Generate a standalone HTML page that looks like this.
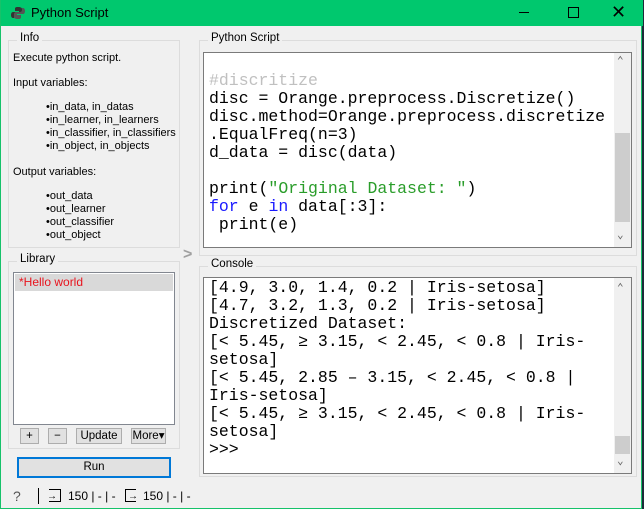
<!DOCTYPE html>
<html><head><style>
*{box-sizing:border-box;margin:0;padding:0}
body{width:644px;height:509px;background:#1e2a3a;position:relative;overflow:hidden;font-family:"Liberation Sans",sans-serif;font-size:12px;color:#000}
.win{position:absolute;left:0;top:0;width:642px;height:509px;background:#f0f0f0;border:1px solid #16c26a;border-top:none}
.title{position:absolute;left:0;top:0;width:642px;height:26px;background:#00c86e}
.title .t{position:absolute;left:30px;top:5px;font-size:13px}
.abs{position:absolute}
.gb{position:absolute;border:1px solid #dcdcdc}
.gl{position:absolute;background:#f0f0f0;padding:0 3px;font-size:11.5px;top:-9px;left:8px}
.code{position:absolute;background:#fff;border:1px solid #7a7a7a;font-family:"Liberation Mono",monospace;font-size:16.5px;line-height:18px;white-space:pre;overflow:hidden}
.sb{position:absolute;right:0;top:0;bottom:0;width:17px;background:#f0f0f0}
.btn{position:absolute;background:#e1e1e1;border:1px solid #adadad;font-size:11.5px;text-align:center;line-height:14px}
.li{position:absolute;font-size:11px}
</style></head><body>
<div class="win">
<div class="title">
<svg class="abs" style="left:10px;top:6px" width="14" height="14"><path d="M7 1C4 1 4 2 4 3v2h4v1H2C1 6 0 7 0 9s1 3 2 3h1v-2c0-1 1-2 2-2h4c1 0 2-1 2-2V3c0-1-1-2-4-2z" fill="#333"/><path d="M7 13c3 0 3-1 3-2V9H6V8h6c1 0 2-1 2-3s-1-3-2-3h-1v2c0 1-1 2-2 2H5C4 6 3 7 3 8v3c0 1 1 2 4 2z" fill="#555"/></svg>
<div class="t">Python Script</div>
<div class="abs" style="left:518px;top:12px;width:10px;height:1px;background:#000"></div>
<div class="abs" style="left:567px;top:7px;width:11px;height:11px;border:1px solid #000"></div>
<div class="abs" style="left:610px;top:1px;font-size:18px;line-height:22px">✕</div>
</div>

<div class="gb" style="left:7px;top:40px;width:172px;height:208px"><div class="gl">Info</div></div>
<div class="li" style="left:12px;top:52px">Execute python script.</div>
<div class="li" style="left:12px;top:77px">Input variables:</div>
<div class="li" style="left:45px;top:101px;line-height:13px">•in_data, in_datas<br>•in_learner, in_learners<br>•in_classifier, in_classifiers<br>•in_object, in_objects</div>
<div class="li" style="left:12px;top:166px">Output variables:</div>
<div class="li" style="left:45px;top:190px;line-height:13px">•out_data<br>•out_learner<br>•out_classifier<br>•out_object</div>

<div class="gb" style="left:7px;top:261px;width:172px;height:188px"><div class="gl">Library</div></div>
<div class="abs" style="left:12px;top:272px;width:162px;height:153px;background:#fff;border:1px solid #828790">
<div style="margin:1px;height:17px;background:#d9d9d9;color:#e8141e;padding-left:4px;line-height:17px;font-size:12px">*Hello world</div></div>
<div class="btn" style="left:19px;top:428px;width:19px;height:16px">+</div>
<div class="btn" style="left:47px;top:428px;width:19px;height:16px">−</div>
<div class="btn" style="left:75px;top:428px;width:46px;height:16px">Update</div>
<div class="btn" style="left:130px;top:428px;width:35px;height:16px">More▾</div>
<div class="btn" style="left:16px;top:457px;width:154px;height:21px;border:2px solid #0078d7;line-height:17px">Run</div>

<div class="abs" style="left:182px;top:246px;color:#a0a0a0;font-size:16px;font-weight:bold">&gt;</div>

<div class="gb" style="left:198px;top:40px;width:438px;height:216px"><div class="gl">Python Script</div></div>
<div class="code" style="left:202px;top:52px;width:429px;height:196px;padding:1px 0 0 5px"> 
<span style="color:#c0c0c0">#discritize</span>
disc = Orange.preprocess.Discretize()
disc.method=Orange.preprocess.discretize
.EqualFreq(n=3)
d_data = disc(data)

print(<span style="color:#2a9d2a">"Original Dataset: "</span>)
<span style="color:#1a1aff">for</span> e <span style="color:#1a1aff">in</span> data[:3]:
 print(e)
<div class="sb"><div class="abs" style="left:3px;top:0;font-size:11px;color:#606060">⌃</div><div class="abs" style="left:1px;top:80px;width:15px;height:89px;background:#cdcdcd"></div><div class="abs" style="left:3px;bottom:2px;font-size:11px;color:#606060">⌄</div></div>
</div>

<div class="gb" style="left:198px;top:266px;width:438px;height:211px"><div class="gl">Console</div></div>
<div class="code" style="left:202px;top:277px;width:429px;height:197px;padding:1px 0 0 5px">[4.9, 3.0, 1.4, 0.2 | Iris-setosa]
[4.7, 3.2, 1.3, 0.2 | Iris-setosa]
Discretized Dataset:
[&lt; 5.45, ≥ 3.15, &lt; 2.45, &lt; 0.8 | Iris-
setosa]
[&lt; 5.45, 2.85 – 3.15, &lt; 2.45, &lt; 0.8 |
Iris-setosa]
[&lt; 5.45, ≥ 3.15, &lt; 2.45, &lt; 0.8 | Iris-
setosa]
&gt;&gt;&gt;
<div class="sb"><div class="abs" style="left:3px;top:2px;font-size:11px;color:#606060">⌃</div><div class="abs" style="left:1px;top:158px;width:15px;height:18px;background:#cdcdcd"></div><div class="abs" style="left:3px;bottom:2px;font-size:11px;color:#606060">⌄</div></div>
</div>

<div class="abs" style="left:12px;top:488px;font-size:14px;color:#555">?</div>
<div class="abs" style="left:37px;top:488px;width:1px;height:16px;background:#000"></div>
<div class="abs" style="left:48px;top:489px;width:12px;height:13px;border:1px solid #000;border-left:none"></div>
<div class="abs" style="left:46px;top:491px;font-size:10px">→</div>
<div class="li" style="left:67px;top:489px;font-size:12px">150 | - | -</div>
<div class="abs" style="left:124px;top:489px;width:11px;height:13px;border:1px solid #000;border-right:none"></div>
<div class="abs" style="left:127px;top:491px;font-size:10px">→</div>
<div class="li" style="left:142px;top:489px;font-size:12px">150 | - | -</div>
</div>
</body></html>
